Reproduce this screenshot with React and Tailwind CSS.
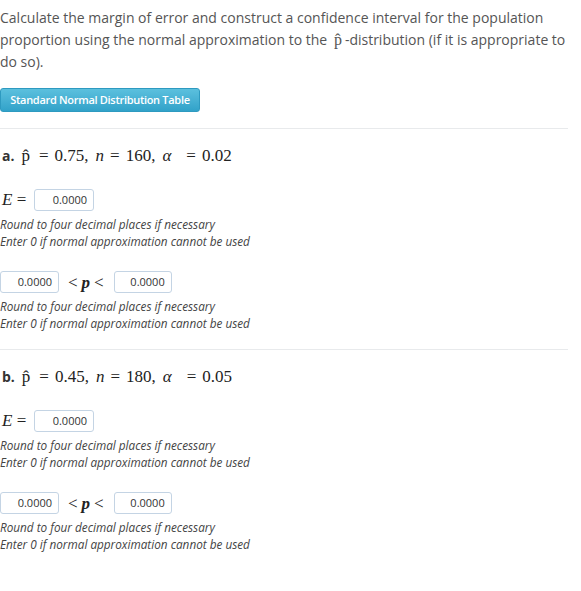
import React from "react";

const hints = (
  <div className="text-[11.75px] leading-[17px] italic text-[#444]">
    <p>Round to four decimal places if necessary</p>
    <p>Enter 0 if normal approximation cannot be used</p>
  </div>
);

const NumBox = ({ className = "" }) => (
  <div
    className={`h-[22px] border border-[#c4d4e4] rounded-[3px] flex items-center justify-end pr-[6px] text-[11px] text-[#333] bg-white ${className}`}
  >
    0.0000
  </div>
);

const serif = "font-['Liberation_Serif',serif] text-[17px] text-[#222]";

const Part = ({ label, p, n, alpha }) => (
  <div className="pt-[14px] pb-[17px]">
    <div className="flex items-baseline h-[24px] pl-[2px]">
      <span className="font-bold text-[14px] text-[#333]">{label}</span>
      <span className={`${serif} ml-[7px]`}>p̂</span>
      <span className={`${serif} ml-[9px]`}>=</span>
      <span className={`${serif} ml-[6px]`}>{p},</span>
      <i className={`${serif} ml-[7px]`}>n</i>
      <span className={`${serif} ml-[6px]`}>=</span>
      <span className={`${serif} ml-[6px]`}>{n},</span>
      <i className={`${serif} ml-[7px]`}>α</i>
      <span className={`${serif} ml-[15px]`}>=</span>
      <span className={`${serif} ml-[6px]`}>{alpha}</span>
    </div>

    <div className="mt-[20px] flex items-center">
      <span className={`${serif} w-[34px] pl-[2px]`}>
        <i>E</i> =
      </span>
      <NumBox className="w-[60px]" />
    </div>
    <div className="mt-[3px]">{hints}</div>

    <div className="mt-[20px] flex items-center">
      <NumBox className="w-[59px]" />
      <span className={`${serif} ml-[9px]`}>&lt;</span>
      <i className={`${serif} font-bold ml-[4px]`}>p</i>
      <span className={`${serif} ml-[4px]`}>&lt;</span>
      <NumBox className="w-[58px] ml-[10px]" />
    </div>
    <div className="mt-[3px]">{hints}</div>
  </div>
);

export default function App() {
  return (
    <div className="w-[568px] bg-white font-['Open_Sans',sans-serif] text-[#555]">
      <p className="pt-[7px] text-[14px] leading-[22px]">
        Calculate the margin of error and construct a confidence interval for the population
        proportion using the normal approximation to the{" "}
        <span className="inline-block font-['Liberation_Serif',serif] text-[16px] leading-[18px] mx-[3px]">p̂</span>-distribution (if it is
        appropriate to do so).
      </p>

      <button className="mt-[15px] h-[24px] w-[200px] rounded-[3px] bg-gradient-to-b from-[#5bc0de] to-[#31a2c9] border border-[#2e9ac0] text-white text-[11px] font-semibold tracking-[-0.3px]">
        Standard Normal Distribution Table
      </button>

      <div className="mt-[16px] border-t border-[#e8eaec]" />
      <Part label="a." p="0.75" n="160" alpha="0.02" />
      <div className="border-t border-[#e8eaec]" />
      <Part label="b." p="0.45" n="180" alpha="0.05" />
    </div>
  );
}
